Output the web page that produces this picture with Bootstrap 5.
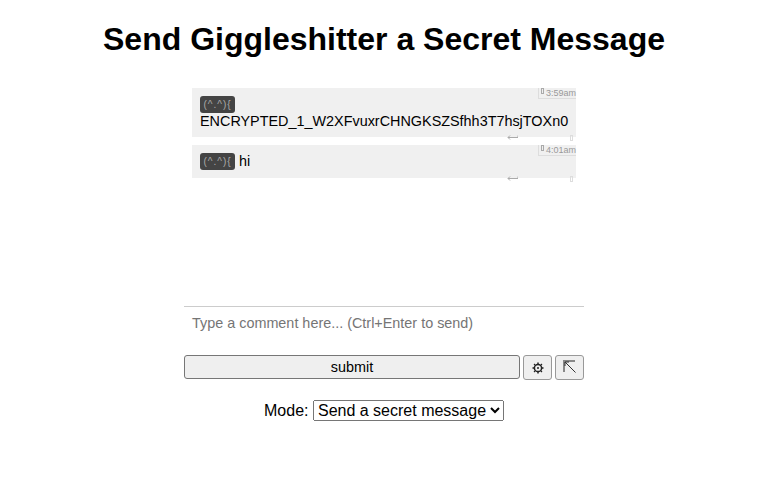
<!DOCTYPE html>
<html lang="en">
<head>
  <meta charset="UTF-8">
  <title>Send a Secret Message</title>
  <link href="https://cdn.jsdelivr.net/npm/bootstrap@5.3.0/dist/css/bootstrap.min.css" rel="stylesheet">
  <style>
    body {
      font-family: "Liberation Sans", Arial, sans-serif;
      font-size: 16px;
      line-height: normal;
      color: #000;
    }

    h1.page-title {
      font-family: "Liberation Sans", Arial, sans-serif;
      font-size: 32px;
      font-weight: 700;
      line-height: 37px;
      margin: 0;
      padding-top: 21px;
      text-align: center;
    }

    .chat-wrap {
      width: 400px;
      margin: 30px auto 0;
    }

    .msg-list {
      height: 218px;
      padding: 0 8px;
    }

    .msg-item {
      position: relative;
      background: #f0f0f0;
      padding: 8px;
      margin-bottom: 8px;
      line-height: 16px;
      font-size: 14.4px;
    }

    .nick-tag {
      display: inline-block;
      background: #444;
      color: #aaa;
      border-radius: 3px;
      font-family: "Liberation Sans", sans-serif;
      font-size: 10px;
      line-height: 17px;
      height: 17px;
      width: 35px;
      text-align: center;
      vertical-align: top;
      letter-spacing: 1px;
      white-space: nowrap;
      overflow: hidden;
    }

    .msg-time {
      position: absolute;
      top: 0;
      right: 0;
      width: 38px;
      height: 11px;
      font-size: 9px;
      line-height: 11px;
      color: #999;
      border-left: 1px solid #ddd;
      border-bottom: 1px solid #ddd;
      white-space: nowrap;
      text-align: right;
    }

    .box-glyph {
      display: inline-block;
      width: 3px;
      height: 6px;
      border: 1px solid #aaa;
      margin-right: 2px;
      vertical-align: 2px;
    }

    .msg-reply {
      position: absolute;
      left: 315px;
      bottom: -3px;
      width: 11px;
      height: 6px;
      display: block;
    }

    .msg-more {
      position: absolute;
      right: 3px;
      bottom: -4px;
      width: 3px;
      height: 6px;
      border: 1px solid #ddd;
    }

    .comment-box {
      display: block;
      width: 100%;
      height: 49px;
      border: 0;
      border-top: 1px solid #ccc;
      padding: 8px;
      font-size: 14.4px;
      line-height: 17px;
      resize: none;
      outline: 0;
      font-family: "Liberation Sans", Arial, sans-serif;
    }

    .comment-box::placeholder {
      color: #757575;
      opacity: 1;
    }

    .send-row {
      height: 25px;
      gap: 3px;
    }

    .send-btn,
    .icon-btn {
      background: #efefef;
      border: 1px solid #767676;
      border-radius: 3px;
      color: #000;
      font-family: "Liberation Sans", Arial, sans-serif;
      font-size: 14.4px;
      padding: 0;
    }

    .send-btn {
      width: 336px;
      height: 24px;
    }

    .icon-btn {
      width: 29px;
      height: 25px;
      border-color: #999;
      line-height: 1;
    }

    .icon-btn svg {
      display: block;
      margin: 0 auto;
    }

    .corner-btn {
      padding-bottom: 3px;
    }

    .mode-row {
      margin-top: 20px;
      text-align: center;
      font-size: 16px;
    }

    .mode-row select {
      font-family: "Liberation Sans", Arial, sans-serif;
      font-size: 16px;
    }
  </style>
</head>
<body>

  <h1 class="page-title">Send Giggleshitter a Secret Message</h1>

  <div class="chat-wrap">
    <div class="msg-list">
      <div class="msg-item">
        <span class="msg-time"><span class="box-glyph"></span>3:59am</span>
        <span class="nick-tag">(^.^){</span><br>
        ENCRYPTED_1_W2XFvuxrCHNGKSZSfhh3T7hsjTOXn0
        <svg class="msg-reply" viewBox="0 0 11 6" fill="none" stroke="#aaa"><path d="M11 1.500V3.500H1M3 1.500L1 3.500L3 5.500"/></svg>
        <span class="msg-more"></span>
      </div>
      <div class="msg-item">
        <span class="msg-time"><span class="box-glyph"></span>4:01am</span>
        <span class="nick-tag">(^.^){</span> hi
        <svg class="msg-reply" viewBox="0 0 11 6" fill="none" stroke="#aaa"><path d="M11 1.500V3.500H1M3 1.500L1 3.500L3 5.500"/></svg>
        <span class="msg-more"></span>
      </div>
    </div>

    <textarea class="comment-box" placeholder="Type a comment here... (Ctrl+Enter to send)"></textarea>

    <div class="d-flex align-items-start send-row">
      <button class="send-btn" type="button">submit</button>
      <button class="icon-btn" type="button">
        <svg width="12" height="12" viewBox="0 0 12 12" fill="none" stroke="#222">
          <circle cx="6" cy="6" r="3.600" stroke-width="1.500"/>
          <circle cx="6" cy="6" r="1" fill="#222" stroke="none"/>
          <path stroke-width="1.500" d="M6 .5V2M6 10V11.500M.5 6H2M10 6H11.500M2.100 2.100L3 3M9 9L9.900 9.900M2.100 9.900L3 9M9 3L9.900 2.100"/>
        </svg>
      </button>
      <button class="icon-btn corner-btn" type="button">
        <svg width="13" height="13" viewBox="0 0 13 13" fill="none">
          <path d="M0 1H12M1 1V12" stroke="#888" stroke-width="2"/>
          <path d="M2 2L12.500 12.500M2 2V6M2 2H6" stroke="#333"/>
        </svg>
      </button>
    </div>

    <div class="mode-row">
      <label for="mode">Mode:</label>
      <select id="mode">
        <option>Send a secret message</option>
      </select>
    </div>
  </div>

  <script src="https://cdn.jsdelivr.net/npm/bootstrap@5.3.0/dist/js/bootstrap.bundle.min.js"></script>
</body>
</html>
